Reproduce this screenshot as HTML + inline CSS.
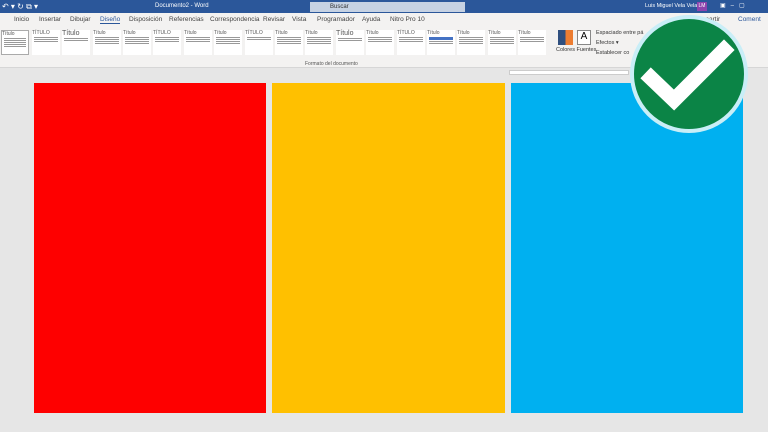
<!DOCTYPE html>
<html><head><meta charset="utf-8"><style>
*{margin:0;padding:0;box-sizing:border-box}
body{width:768px;height:432px;overflow:hidden;background:#e6e6e6;font-family:"Liberation Sans",sans-serif;position:relative}
.title{position:absolute;left:0;top:0;width:768px;height:13px;background:#2b579a;color:#fff;font-size:6px}
.tabs{position:absolute;left:0;top:13px;width:768px;height:14px;background:#f3f2f1;font-size:6.5px;color:#444}
.tabs span{position:absolute;top:3px}
.ribbon{position:absolute;left:0;top:27px;width:768px;height:41px;background:#f3f2f1;border-bottom:1px solid #d6d6d6}
.thumb{position:absolute;top:3px;width:28px;height:25px;background:#fff;font-size:5px;color:#555}
.thumb i{display:block;height:1px;background:#999;margin:1px 2px}
.page{position:absolute;top:83px;height:330px}
</style></head><body>
<div class="title">
<span style="position:absolute;left:2px;top:2px;font-size:8px">↶ ▾ ↻ ⧉ ▾</span>
<span style="position:absolute;left:155px;top:3px">Documento2 - Word</span>
<div style="position:absolute;left:310px;top:2px;width:155px;height:10px;background:#c6d2e3;color:#333;padding-left:20px;font-size:6px;line-height:10px">Buscar</div>
<span style="position:absolute;left:645px;top:3px;font-size:5.5px">Luis Miguel Vela Vela</span>
<div style="position:absolute;left:697px;top:2px;width:10px;height:9px;background:#8e44ad;font-size:5px;text-align:center;line-height:9px">LM</div>
<span style="position:absolute;left:720px;top:2px">▣ &nbsp; – &nbsp; ▢</span>
</div>
<div class="tabs">
<span style="left:14px">Inicio</span><span style="left:39px">Insertar</span><span style="left:70px">Dibujar</span>
<span style="left:100px;color:#2b579a;border-bottom:1px solid #2b579a">Diseño</span>
<span style="left:129px">Disposición</span><span style="left:169px">Referencias</span><span style="left:210px">Correspondencia</span>
<span style="left:263px">Revisar</span><span style="left:292px">Vista</span><span style="left:317px">Programador</span><span style="left:362px">Ayuda</span><span style="left:390px">Nitro Pro 10</span>
<span style="left:700px">mpartir</span><span style="left:738px;color:#2b579a">Coment</span>
</div>
<div class="ribbon">
<div class="thumb" style="left:1px;border:1px solid #aaa">Título<i></i><i></i><i></i><i></i><i></i></div>
<div class="thumb" style="left:32px">TÍTULO<i></i><i></i><i></i></div>
<div class="thumb" style="left:62px;font-size:7px">Título<i></i><i></i></div>
<div class="thumb" style="left:93px">Título<i></i><i></i><i></i><i></i></div>
<div class="thumb" style="left:123px">Título<i></i><i></i><i></i><i></i></div>
<div class="thumb" style="left:153px">TÍTULO<i></i><i></i><i></i></div>
<div class="thumb" style="left:184px">Título<i></i><i></i><i></i></div>
<div class="thumb" style="left:214px">Título<i></i><i></i><i></i><i></i></div>
<div class="thumb" style="left:245px">TÍTULO<i></i><i></i></div>
<div class="thumb" style="left:275px">Título<i></i><i></i><i></i><i></i></div>
<div class="thumb" style="left:305px">Título<i></i><i></i><i></i><i></i></div>
<div class="thumb" style="left:336px;font-size:7px">Título<i></i><i></i></div>
<div class="thumb" style="left:366px">Título<i></i><i></i><i></i></div>
<div class="thumb" style="left:397px">TÍTULO<i></i><i></i><i></i></div>
<div class="thumb" style="left:427px">Título<i style="height:3px;background:#4472c4"></i><i></i><i></i></div>
<div class="thumb" style="left:457px">Título<i></i><i></i><i></i><i></i></div>
<div class="thumb" style="left:488px">Título<i></i><i></i><i></i><i></i></div>
<div class="thumb" style="left:518px">Título<i></i><i></i><i></i></div>
<div style="position:absolute;left:558px;top:3px;width:15px;height:15px;background:linear-gradient(90deg,#2f4f7f 50%,#ed7d31 50%)"></div>
<div style="position:absolute;left:577px;top:3px;width:14px;height:15px;border:1px solid #888;background:#fff;font-size:10px;text-align:center">A</div>
<span style="position:absolute;left:556px;top:20px;font-size:5.5px;color:#333">Colores Fuentes</span>
<span style="position:absolute;left:596px;top:3px;font-size:5.5px;color:#333">Espaciado entre pá</span>
<span style="position:absolute;left:596px;top:13px;font-size:5.5px;color:#333">Efectos ▾</span>
<span style="position:absolute;left:596px;top:23px;font-size:5.5px;color:#333">Establecer co</span>
<span style="position:absolute;left:305px;top:34px;font-size:5px;color:#555">Formato del documento</span>
</div>
<div style="position:absolute;left:509px;top:70px;width:120px;height:5px;background:#fff;border:1px solid #ccc"></div>
<div class="page" style="left:34px;width:232px;background:#fe0000"></div>
<div class="page" style="left:272px;width:233px;background:#ffc000"></div>
<div class="page" style="left:511px;width:232px;background:#00b0f0"></div>
<svg style="position:absolute;left:629px;top:14px" width="120" height="120" viewBox="0 0 120 120">
<circle cx="60" cy="60" r="57" fill="#0b8446" stroke="#c9eef7" stroke-width="4"/>
<path d="M22 64 L45 86 L95 36" fill="none" stroke="#fff" stroke-width="15" stroke-linecap="square"/>
</svg>
</body></html>
